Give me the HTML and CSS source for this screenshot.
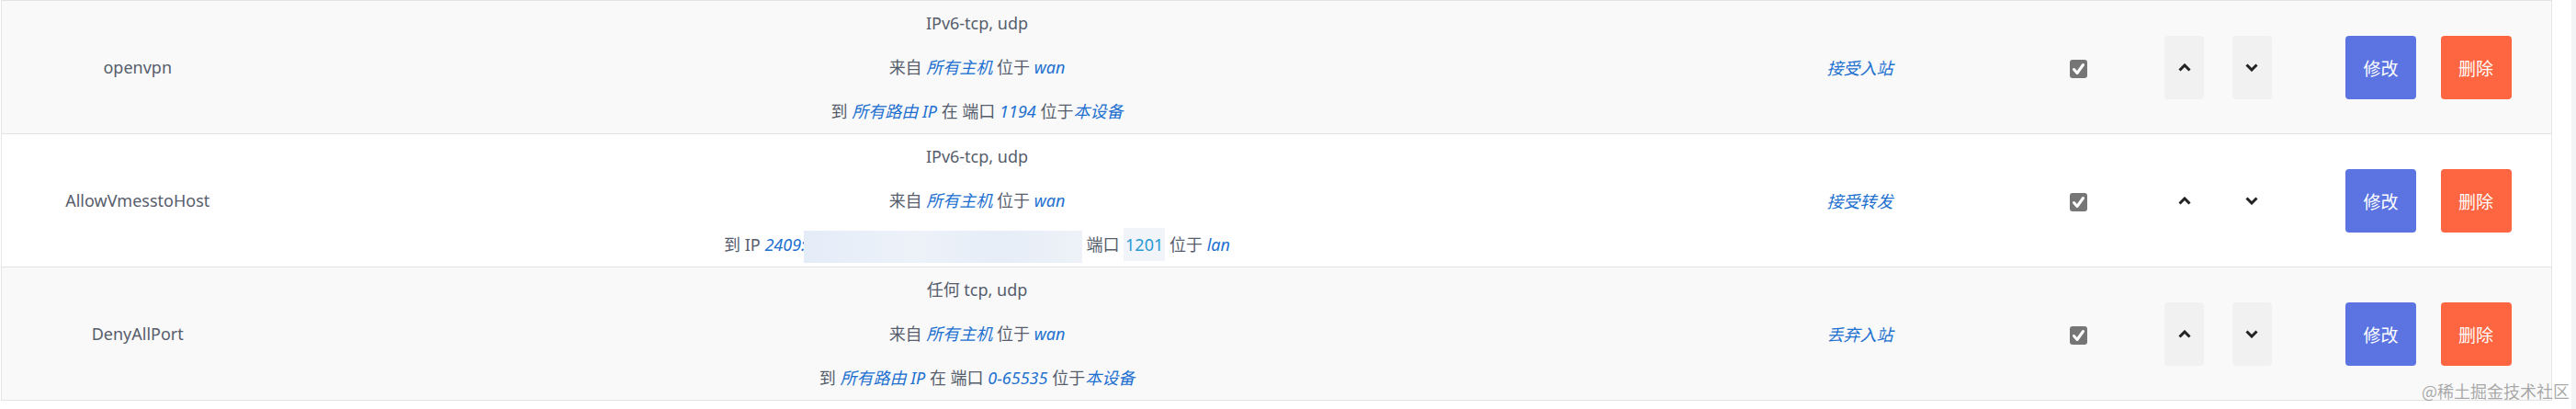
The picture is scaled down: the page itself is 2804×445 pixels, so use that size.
FILE: index.html
```html
<!DOCTYPE html>
<html lang="zh-CN">
<head>
    <meta charset="UTF-8">
    <meta name="viewport" content="width=device-width, initial-scale=1.0">
    <title>通信规则</title>
    <link rel="stylesheet" href="styles.css">
</head>
<body>
    <div class="page">
        <table class="rules">
            <colgroup>
                <col class="col-name">
                <col class="col-match">
                <col class="col-target">
                <col class="col-enable">
                <col class="col-sort">
                <col class="col-ops">
            </colgroup>
            <tbody>
                <tr class="odd">
                    <td class="name">openvpn</td>
                    <td class="match">
                        <div>IPv6-tcp, udp</div>
                        <div>来自 <em>所有主机</em> 位于 <em>wan</em></div>
                        <div>到 <em>所有路由 IP</em> 在 端口 <em>1194</em> 位于<em>本设备</em></div>
                    </td>
                    <td class="target"><em>接受入站</em></td>
                    <td class="enable">
                        <span class="check"><svg viewBox="0 0 19 20" width="19" height="20"><path d="M4.5 10.5 L8 14.5 L14.5 5.5" fill="none" stroke="#fff" stroke-width="3" stroke-linecap="round" stroke-linejoin="round"/></svg></span>
                    </td>
                    <td class="sort">
                        <button class="move"><svg viewBox="0 0 14 9" width="14" height="9"><polyline points="1.5,7.5 7,2 12.5,7.5" fill="none" stroke="#222" stroke-width="3"/></svg></button>
                        <button class="move"><svg viewBox="0 0 14 9" width="14" height="9"><polyline points="1.5,1.5 7,7 12.5,1.5" fill="none" stroke="#222" stroke-width="3"/></svg></button>
                    </td>
                    <td class="ops">
                        <button class="btn btn-edit">修改</button>
                        <button class="btn btn-del">删除</button>
                    </td>
                </tr>
                <tr class="even">
                    <td class="name">AllowVmesstoHost</td>
                    <td class="match">
                        <div>IPv6-tcp, udp</div>
                        <div>来自 <em>所有主机</em> 位于 <em>wan</em></div>
                        <div>到 IP <em>2409:</em><span class="redact"></span> 端口 <span class="port">1201</span> 位于 <em>lan</em></div>
                    </td>
                    <td class="target"><em>接受转发</em></td>
                    <td class="enable">
                        <span class="check"><svg viewBox="0 0 19 20" width="19" height="20"><path d="M4.5 10.5 L8 14.5 L14.5 5.5" fill="none" stroke="#fff" stroke-width="3" stroke-linecap="round" stroke-linejoin="round"/></svg></span>
                    </td>
                    <td class="sort">
                        <button class="move"><svg viewBox="0 0 14 9" width="14" height="9"><polyline points="1.5,7.5 7,2 12.5,7.5" fill="none" stroke="#222" stroke-width="3"/></svg></button>
                        <button class="move"><svg viewBox="0 0 14 9" width="14" height="9"><polyline points="1.5,1.5 7,7 12.5,1.5" fill="none" stroke="#222" stroke-width="3"/></svg></button>
                    </td>
                    <td class="ops">
                        <button class="btn btn-edit">修改</button>
                        <button class="btn btn-del">删除</button>
                    </td>
                </tr>
                <tr class="odd">
                    <td class="name">DenyAllPort</td>
                    <td class="match">
                        <div>任何 tcp, udp</div>
                        <div>来自 <em>所有主机</em> 位于 <em>wan</em></div>
                        <div>到 <em>所有路由 IP</em> 在 端口 <em>0-65535</em> 位于<em>本设备</em></div>
                    </td>
                    <td class="target"><em>丢弃入站</em></td>
                    <td class="enable">
                        <span class="check"><svg viewBox="0 0 19 20" width="19" height="20"><path d="M4.5 10.5 L8 14.5 L14.5 5.5" fill="none" stroke="#fff" stroke-width="3" stroke-linecap="round" stroke-linejoin="round"/></svg></span>
                    </td>
                    <td class="sort">
                        <button class="move"><svg viewBox="0 0 14 9" width="14" height="9"><polyline points="1.5,7.5 7,2 12.5,7.5" fill="none" stroke="#222" stroke-width="3"/></svg></button>
                        <button class="move"><svg viewBox="0 0 14 9" width="14" height="9"><polyline points="1.5,1.5 7,7 12.5,1.5" fill="none" stroke="#222" stroke-width="3"/></svg></button>
                    </td>
                    <td class="ops">
                        <button class="btn btn-edit">修改</button>
                        <button class="btn btn-del">删除</button>
                    </td>
                </tr>
            </tbody>
        </table>
        <div class="rail"></div>
        <div class="watermark">@稀土掘金技术社区</div>
    </div>
</body>
</html>
```

FILE: styles.css
```css
body {
    margin: 0;
    font-family: "Noto Sans", "Noto Sans CJK SC", sans-serif;
    color: #565d6c;
    background: #fff;
}
.page {
    position: relative;
    display: flex;
    height: 445px;
}
.rules {
    width: 2776px;
    height: 433px;
    margin-left: 1px;
    border-collapse: collapse;
    table-layout: fixed;
    border-left: 1px solid #e6e6e6;
    border-right: 1px solid #e6e6e6;
}
.col-name { width: 296px; }
.col-match { width: 1532px; }
.col-target { width: 390px; }
.col-enable { width: 86px; }
.col-sort { width: 218px; }
.col-ops { width: 254px; }
.rules td {
    padding: 0;
    text-align: center;
    vertical-align: middle;
    font-size: 18px;
    border-top: 1px solid #e3e3e3;
    border-bottom: 1px solid #e3e3e3;
}
.rules tr.odd {
    background: #f9f9f9;
}
.rules tr.even {
    background: #fff;
}
.match div {
    line-height: 48px;
    white-space: nowrap;
}
em {
    color: #2170d0;
}
.ops {
    padding-right: 14px !important;
}
.redact {
    display: inline-block;
    width: 303px;
    height: 35px;
    vertical-align: middle;
    margin-left: -2px;
    background: linear-gradient(90deg, #e4ecf8, #edf2f9 40%, #e6edf7 70%, #eef2f8);
}
.port {
    display: inline-block;
    padding: 0 2px;
    line-height: 36px;
    color: #2a9ad6;
    background: #f1f4f8;
}
.check {
    display: inline-block;
    width: 19px;
    height: 20px;
    border-radius: 3px;
    background: #767676;
    vertical-align: middle;
}
.check svg {
    display: block;
}
.move {
    width: 43px;
    height: 69px;
    margin: 0 13px;
    padding: 0;
    border: none;
    border-radius: 4px;
    background: #f1f1f1;
    vertical-align: middle;
    cursor: pointer;
}
.even .move {
    background: transparent;
}
.move svg {
    display: block;
    margin: 0 auto;
}
.btn {
    width: 77px;
    height: 69px;
    margin: 0 11px;
    padding: 0;
    border: none;
    border-radius: 4px;
    color: #fff;
    font-family: "Noto Sans CJK SC", sans-serif;
    font-size: 19px;
    vertical-align: middle;
    cursor: pointer;
}
.btn-edit {
    background: #5b74e1;
}
.btn-del {
    background: #fd6641;
}
.rail {
    margin-left: auto;
    width: 5px;
    background: #f3f4f5;
}
.watermark {
    position: absolute;
    right: 7px;
    bottom: 7px;
    font-family: "Noto Sans CJK SC", sans-serif;
    font-size: 18px;
    color: rgba(140, 140, 140, 0.75);
}
```
